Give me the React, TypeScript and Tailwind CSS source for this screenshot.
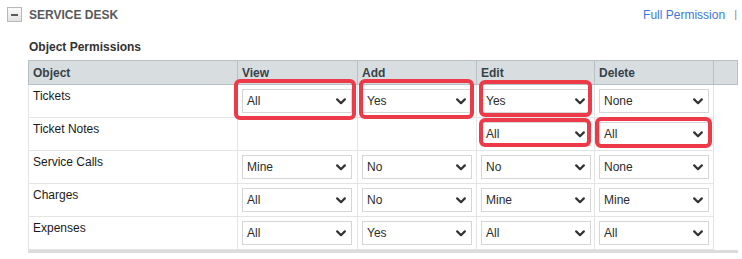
import React from 'react'

type Mark = { l: number; t: number; r: number; b: number }
type Cell = { value: string | null; mark?: Mark }

const rows: { label: string; cells: Cell[] }[] = [
  {
    label: 'Tickets',
    cells: [
      { value: 'All', mark: { l: 8, t: 10, r: 4, b: 7 } },
      { value: 'Yes', mark: { l: 3, t: 10, r: 2, b: 6 } },
      { value: 'Yes', mark: { l: 2, t: 9, r: 1, b: 4 } },
      { value: 'None' },
    ],
  },
  {
    label: 'Ticket Notes',
    cells: [
      { value: null },
      { value: null },
      { value: 'All', mark: { l: 2, t: 4, r: 0, b: 1 } },
      { value: 'All', mark: { l: 4, t: 5, r: 3, b: 2 } },
    ],
  },
  { label: 'Service Calls', cells: [{ value: 'Mine' }, { value: 'No' }, { value: 'No' }, { value: 'None' }] },
  { label: 'Charges', cells: [{ value: 'All' }, { value: 'No' }, { value: 'Mine' }, { value: 'Mine' }] },
  { label: 'Expenses', cells: [{ value: 'All' }, { value: 'Yes' }, { value: 'All' }, { value: 'All' }] },
]

const permCols = [
  { name: 'View', w: 'w-[120px]' },
  { name: 'Add', w: 'w-[119px]' },
  { name: 'Edit', w: 'w-[118px]' },
  { name: 'Delete', w: 'w-[119px]' },
]

function Chevron() {
  return (
    <svg width="10" height="7" viewBox="0 0 10 7" className="shrink-0">
      <path d="M1.2 1.4 L5 5.2 L8.8 1.4" fill="none" stroke="#333" strokeWidth="2.2" strokeLinecap="round" strokeLinejoin="round" />
    </svg>
  )
}

function FakeSelect({ value, mark }: { value: string; mark?: Mark }) {
  return (
    <div className="relative w-[110px] h-[24px]">
      <div className="flex items-center justify-between w-full h-full border border-[#d6d6d6] bg-white pl-[4px] pr-[5px] text-[12px] text-[#2b2b2b]">
        <span>{value}</span>
        <Chevron />
      </div>
      {mark && (
        <span
          className="absolute border-[4px] border-[#ec3a48] rounded-[6px] pointer-events-none"
          style={{ left: -mark.l, top: -mark.t, right: -mark.r, bottom: -mark.b }}
        />
      )}
    </div>
  )
}

export default function App() {
  return (
    <div className="w-[742px] h-[259px] overflow-hidden bg-white font-['Liberation_Sans',Arial,sans-serif] text-[12px]">
      {/* section header */}
      <div className="flex items-center h-[29px] pl-[7px] pr-[5px]">
        <div className="flex items-center justify-center w-[15px] h-[15px] border border-[#b8b8b8] bg-gradient-to-b from-[#fbfbfb] to-[#e2e2e2]">
          <div className="w-[7px] h-[2px] bg-[#5a5a5a]" />
        </div>
        <span className="ml-[7px] font-bold text-[#595959]">SERVICE DESK</span>
        <span className="ml-auto text-[#3d78d6]">Full Permission</span>
        <span className="ml-[9px] text-[11px] text-[#888]">|</span>
      </div>

      <div className="mt-[11px] pl-[29px] leading-[14px] font-bold text-[#333]">Object Permissions</div>

      {/* permissions grid */}
      <div className="ml-[28px] mt-[6px] w-[710px]">
        <div className="flex h-[25px] border-y border-[#b7c0c4] bg-[#d8dee0] font-bold text-[#37414a]">
          <div className="w-[209px] flex items-center border-l border-[#b7c0c4] pl-[4px]">Object</div>
          {permCols.map((c) => (
            <div key={c.name} className={`${c.w} flex items-center border-l border-[#b7c0c4] pl-[4px]`}>
              {c.name}
            </div>
          ))}
          <div className="w-[25px] border-x border-[#b7c0c4]" />
        </div>

        {rows.map((row) => (
          <div key={row.label} className="flex h-[33px]">
            <div className="w-[209px] border-l border-b border-[#e4e4e4] pl-[4px] pt-[4px] leading-[14px] text-[#1a1a1a]">
              {row.label}
            </div>
            {row.cells.map((cell, i) => (
              <div key={i} className={`${permCols[i].w} border-l border-b border-[#e4e4e4] pl-[4px] pt-[4px]`}>
                {cell.value && <FakeSelect value={cell.value} mark={cell.mark} />}
              </div>
            ))}
            <div className="w-[25px] border-l border-[#e4e4e4]" />
          </div>
        ))}
        <div className="h-[3px] bg-[#dcdcdc]" />
      </div>
    </div>
  )
}
